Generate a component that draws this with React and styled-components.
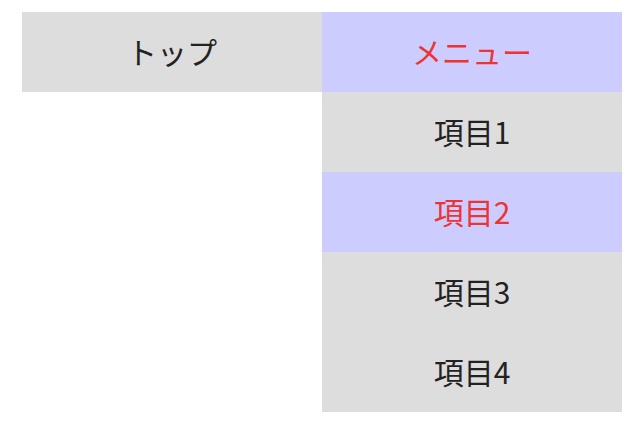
import React from "react";
import styled, { createGlobalStyle } from "styled-components";

const Global = createGlobalStyle`
  html, body { margin: 0; padding: 0; background: #fff; }
  body {
    font-family: "Noto Sans CJK JP", "Noto Sans", sans-serif;
    color: #222;
  }
`;

const Page = styled.div`
  padding: 12px 22px;
  min-height: 406px;
`;

const NavBar = styled.ul`
  display: flex;
  align-items: flex-start;
  list-style: none;
  margin: 0;
  padding: 0;
`;

const NavItem = styled.li`
  flex: 0 0 300px;
  width: 300px;
`;

const NavLink = styled.a`
  display: flex;
  align-items: center;
  justify-content: center;
  height: 80px;
  padding-bottom: 3px;
  box-sizing: border-box;
  font-size: 30px;
  line-height: 1;
  text-decoration: none;
  background: ${(p) => (p.$active ? "#ccf" : "#ddd")};
  color: ${(p) => (p.$active ? "#ee3333" : "#222")};
`;

const Dropdown = styled.ul`
  width: 300px;
  list-style: none;
  margin: 0;
  padding: 0;
`;

const DropItem = styled.li``;

const items = ["項目1", "項目2", "項目3", "項目4"];

export default function App() {
  return (
    <>
      <Global />
      <Page>
        <NavBar>
          <NavItem>
            <NavLink href="#">トップ</NavLink>
          </NavItem>
          <NavItem>
            <NavLink href="#" $active>メニュー</NavLink>
            <Dropdown>
              {items.map((t, i) => (
                <DropItem key={t}>
                  <NavLink href="#" $active={i === 1}>{t}</NavLink>
                </DropItem>
              ))}
            </Dropdown>
          </NavItem>
        </NavBar>
      </Page>
    </>
  );
}
